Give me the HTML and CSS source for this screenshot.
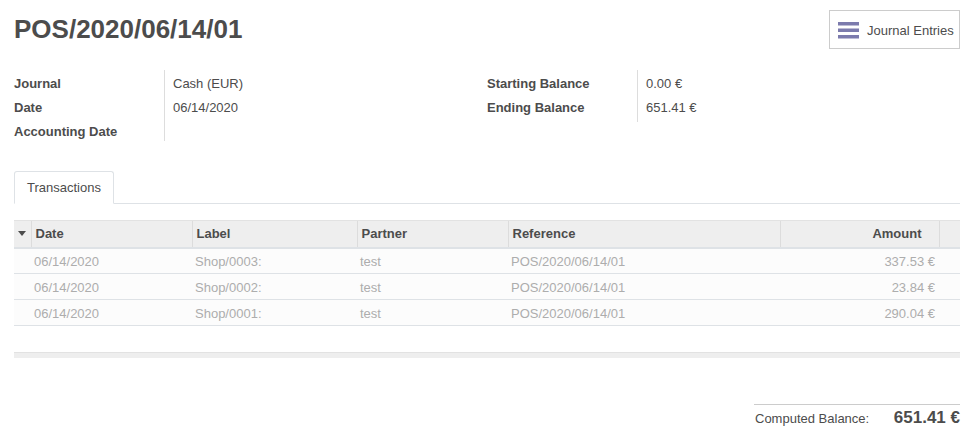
FILE: index.html
```html
<!DOCTYPE html>
<html lang="en">
<head>
  <meta charset="UTF-8">
  <title>POS/2020/06/14/01</title>
  <link rel="stylesheet" href="styles.css">
</head>
<body>
  <div class="sheet">
    <div class="title-bar">
      <h1 class="record-name">POS/2020/06/14/01</h1>
      <button class="smart-btn">
        <svg class="smart-icon" width="21" height="18" viewBox="0 0 21 18">
          <rect x="0" y="1" width="21" height="3.5" fill="#7c7bad"/>
          <rect x="0" y="7.5" width="21" height="3.5" fill="#7c7bad"/>
          <rect x="0" y="14" width="21" height="3.5" fill="#7c7bad"/>
        </svg>
        <span>Journal Entries</span>
      </button>
    </div>

    <div class="groups">
      <div class="group">
        <div class="field-labels">
          <div class="field-label">Journal</div>
          <div class="field-label">Date</div>
          <div class="field-label">Accounting Date</div>
        </div>
        <div class="field-values">
          <div class="field-value">Cash (EUR)</div>
          <div class="field-value">06/14/2020</div>
          <div class="field-value"></div>
        </div>
      </div>
      <div class="group">
        <div class="field-labels">
          <div class="field-label">Starting Balance</div>
          <div class="field-label">Ending Balance</div>
        </div>
        <div class="field-values">
          <div class="field-value">0.00 €</div>
          <div class="field-value">651.41 €</div>
        </div>
      </div>
    </div>

    <div class="tabs">
      <div class="tab active">Transactions</div>
    </div>

    <table class="lines">
      <colgroup>
        <col style="width: 17px">
        <col style="width: 161px">
        <col style="width: 165px">
        <col style="width: 151px">
        <col style="width: 272px">
        <col style="width: 159px">
        <col style="width: 21px">
      </colgroup>
      <thead>
        <tr>
          <th class="caret-cell"><span class="caret"></span></th>
          <th>Date</th>
          <th>Label</th>
          <th>Partner</th>
          <th>Reference</th>
          <th class="num">Amount</th>
          <th class="last"></th>
        </tr>
      </thead>
      <tbody>
        <tr>
          <td></td>
          <td>06/14/2020</td>
          <td>Shop/0003:</td>
          <td>test</td>
          <td>POS/2020/06/14/01</td>
          <td class="num">337.53 €</td>
          <td></td>
        </tr>
        <tr>
          <td></td>
          <td>06/14/2020</td>
          <td>Shop/0002:</td>
          <td>test</td>
          <td>POS/2020/06/14/01</td>
          <td class="num">23.84 €</td>
          <td></td>
        </tr>
        <tr>
          <td></td>
          <td>06/14/2020</td>
          <td>Shop/0001:</td>
          <td>test</td>
          <td>POS/2020/06/14/01</td>
          <td class="num">290.04 €</td>
          <td></td>
        </tr>
      </tbody>
    </table>
    <div class="table-foot"></div>

    <div class="totals">
      <div class="total-row">
        <span class="total-label">Computed Balance:</span>
        <span class="total-value">651.41 €</span>
      </div>
    </div>
  </div>
</body>
</html>
```

FILE: styles.css
```css
* {
  margin: 0;
  padding: 0;
  box-sizing: border-box;
}

body {
  font-family: "Liberation Sans", Arial, sans-serif;
  font-size: 13px;
  color: #4c4c4c;
  background: #ffffff;
}

.sheet {
  padding: 10px 5px 0 14px;
}

.title-bar {
  display: flex;
  justify-content: space-between;
  align-items: flex-start;
}

.record-name {
  font-size: 26px;
  font-weight: 700;
  line-height: 30px;
  margin-top: 4px;
  color: #4c4c4c;
}

.smart-btn {
  width: 131px;
  height: 39px;
  display: flex;
  align-items: center;
  gap: 8px;
  padding: 1px 0 0 8px;
  background: #ffffff;
  border: 1px solid #cccccc;
  font-family: inherit;
  font-size: 13px;
  color: #4c4c4c;
  white-space: nowrap;
}

.smart-icon {
  flex: none;
}

.groups {
  display: flex;
  margin-top: 21px;
}

.group {
  width: 473px;
  display: flex;
  align-items: flex-start;
}

.field-labels {
  width: 150px;
  padding: 2px 0;
}

.field-label {
  height: 24px;
  line-height: 24px;
  font-weight: 700;
}

.field-values {
  border-left: 1px solid #dddddd;
  padding: 2px 0 2px 8px;
  flex: 1;
}

.field-value {
  height: 24px;
  line-height: 24px;
  color: #4c4c4c;
}

.field-value:last-child:empty {
  height: 19px;
}

.tabs {
  display: flex;
  margin-top: 25px;
  border-bottom: 1px solid #dee2e6;
}

.tab {
  height: 33px;
  line-height: 32px;
  padding: 0 12px;
  margin-bottom: -1px;
  border: 1px solid #dee2e6;
  border-bottom-color: #ffffff;
  border-radius: 3px 3px 0 0;
  background: #ffffff;
  color: #4c4c4c;
}

.lines {
  width: 946px;
  margin-top: 16px;
  border-collapse: collapse;
  table-layout: fixed;
}

.lines th {
  height: 27px;
  padding: 0 4px;
  text-align: left;
  font-weight: 700;
  background: #eeeeee;
  border-top: 1px solid #e2e2e2;
  border-left: 1px solid #dcdcdc;
  border-bottom: 2px solid #dee2e6;
  color: #4c4c4c;
}

.lines th:first-child {
  border-left: none;
}

.lines th.caret-cell {
  padding: 0 0 0 4px;
}

.caret {
  display: inline-block;
  width: 0;
  height: 0;
  border-left: 4px solid transparent;
  border-right: 4px solid transparent;
  border-top: 5px solid #4c4c4c;
  vertical-align: middle;
  margin-bottom: 2px;
}

.lines td {
  height: 26px;
  padding: 1px 3px 0;
  color: #adadad;
  background: #fcfcfc;
  border-bottom: 1px solid #dee2e6;
  white-space: nowrap;
}

.lines .num {
  text-align: right;
}

.lines th.num {
  padding-right: 17px;
}

.lines td.num {
  padding-right: 4px;
}

.table-foot {
  width: 946px;
  height: 6px;
  margin-top: 26px;
  background: #eeeeee;
  border-top: 1px solid #e2e2e2;
}

.totals {
  display: flex;
  justify-content: flex-end;
  margin-top: 46px;
}

.total-row {
  width: 206px;
  display: flex;
  justify-content: space-between;
  align-items: baseline;
  border-top: 1px solid #cccccc;
  padding-top: 3px;
}

.total-label {
  padding-left: 1px;
}

.total-value {
  font-size: 17px;
  font-weight: 700;
}
```
